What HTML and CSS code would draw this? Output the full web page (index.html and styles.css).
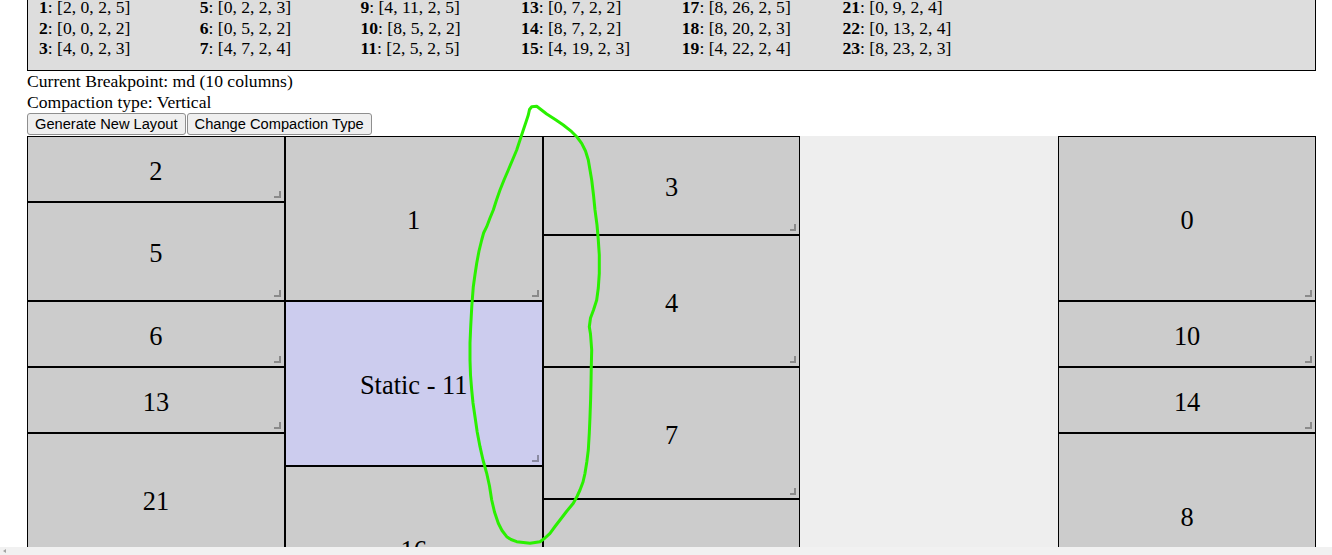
FILE: index.html
```html
<!DOCTYPE html>
<html>
<head>
<meta charset="utf-8">
<title>Responsive grid layout</title>
<link rel="stylesheet" href="styles.css">
</head>
<body>
<div class="viewport">
  <div class="page">
    <div class="layout-json">
      <div class="columns">
        <div class="li"><b>0</b>: [8, 0, 2, 5]</div>
        <div class="li"><b>1</b>: [2, 0, 2, 5]</div>
        <div class="li"><b>2</b>: [0, 0, 2, 2]</div>
        <div class="li"><b>3</b>: [4, 0, 2, 3]</div>
        <div class="li"><b>4</b>: [4, 3, 2, 4]</div>
        <div class="li"><b>5</b>: [0, 2, 2, 3]</div>
        <div class="li"><b>6</b>: [0, 5, 2, 2]</div>
        <div class="li"><b>7</b>: [4, 7, 2, 4]</div>
        <div class="li"><b>8</b>: [8, 9, 2, 5]</div>
        <div class="li"><b>9</b>: [4, 11, 2, 5]</div>
        <div class="li"><b>10</b>: [8, 5, 2, 2]</div>
        <div class="li"><b>11</b>: [2, 5, 2, 5]</div>
        <div class="li"><b>12</b>: [0, 17, 2, 3]</div>
        <div class="li"><b>13</b>: [0, 7, 2, 2]</div>
        <div class="li"><b>14</b>: [8, 7, 2, 2]</div>
        <div class="li"><b>15</b>: [4, 19, 2, 3]</div>
        <div class="li"><b>16</b>: [2, 10, 2, 5]</div>
        <div class="li"><b>17</b>: [8, 26, 2, 5]</div>
        <div class="li"><b>18</b>: [8, 20, 2, 3]</div>
        <div class="li"><b>19</b>: [4, 22, 2, 4]</div>
        <div class="li"><b>20</b>: [2, 15, 2, 4]</div>
        <div class="li"><b>21</b>: [0, 9, 2, 4]</div>
        <div class="li"><b>22</b>: [0, 13, 2, 4]</div>
        <div class="li"><b>23</b>: [8, 23, 2, 3]</div>
      </div>
    </div>
    <div class="line">Current Breakpoint: md (10 columns)</div>
    <div class="line">Compaction type: Vertical</div>
    <div class="buttons">
      <button class="btn">Generate New Layout</button>
      <button class="btn">Change Compaction Type</button>
    </div>
    <div class="grid">
      <div class="item" style="grid-column: 9 / span 2; grid-row: 1 / span 5;"><span class="text">0</span></div>
      <div class="item" style="grid-column: 3 / span 2; grid-row: 1 / span 5;"><span class="text">1</span></div>
      <div class="item" style="grid-column: 1 / span 2; grid-row: 1 / span 2;"><span class="text">2</span></div>
      <div class="item" style="grid-column: 5 / span 2; grid-row: 1 / span 3;"><span class="text">3</span></div>
      <div class="item" style="grid-column: 5 / span 2; grid-row: 4 / span 4;"><span class="text">4</span></div>
      <div class="item" style="grid-column: 1 / span 2; grid-row: 3 / span 3;"><span class="text">5</span></div>
      <div class="item" style="grid-column: 1 / span 2; grid-row: 6 / span 2;"><span class="text">6</span></div>
      <div class="item" style="grid-column: 5 / span 2; grid-row: 8 / span 4;"><span class="text">7</span></div>
      <div class="item" style="grid-column: 9 / span 2; grid-row: 10 / span 5;"><span class="text">8</span></div>
      <div class="item" style="grid-column: 5 / span 2; grid-row: 12 / span 5;"><span class="text">9</span></div>
      <div class="item" style="grid-column: 9 / span 2; grid-row: 6 / span 2;"><span class="text">10</span></div>
      <div class="item static" style="grid-column: 3 / span 2; grid-row: 6 / span 5;"><span class="text">Static - 11</span></div>
      <div class="item" style="grid-column: 1 / span 2; grid-row: 18 / span 3;"><span class="text">12</span></div>
      <div class="item" style="grid-column: 1 / span 2; grid-row: 8 / span 2;"><span class="text">13</span></div>
      <div class="item" style="grid-column: 9 / span 2; grid-row: 8 / span 2;"><span class="text">14</span></div>
      <div class="item" style="grid-column: 5 / span 2; grid-row: 20 / span 3;"><span class="text">15</span></div>
      <div class="item" style="grid-column: 3 / span 2; grid-row: 11 / span 5;"><span class="text">16</span></div>
      <div class="item" style="grid-column: 9 / span 2; grid-row: 27 / span 5;"><span class="text">17</span></div>
      <div class="item" style="grid-column: 9 / span 2; grid-row: 21 / span 3;"><span class="text">18</span></div>
      <div class="item" style="grid-column: 5 / span 2; grid-row: 23 / span 4;"><span class="text">19</span></div>
      <div class="item" style="grid-column: 3 / span 2; grid-row: 16 / span 4;"><span class="text">20</span></div>
      <div class="item" style="grid-column: 1 / span 2; grid-row: 10 / span 4;"><span class="text">21</span></div>
      <div class="item" style="grid-column: 1 / span 2; grid-row: 14 / span 4;"><span class="text">22</span></div>
      <div class="item" style="grid-column: 9 / span 2; grid-row: 24 / span 3;"><span class="text">23</span></div>
    </div>
  </div>
  <svg class="annotation" viewBox="0 0 1332 547" width="1332" height="547" xmlns="http://www.w3.org/2000/svg">
    <path class="loop" d="M531.7 106.7 L536.7 106.3 L546.7 114 L556 120 L563.3 125 L571.7 131.7 L577 137 L581.7 143.3 L585.5 151 L588.3 160 L590 170 L591.7 180 L593.5 195 L595 210 L597 225 L598.3 240 L599.3 255 L599.3 273.3 L598.3 288 L596.7 300 L593.5 310 L590.5 318 L589.3 326.7 L590.5 334 L591.7 350 L591.3 366 L591 383.3 L590.6 400 L590 416.7 L589.3 433 L588.3 450 L586.8 462 L585 473.3 L583 482 L580 490 L577 496.5 L573.3 503.3 L566.5 511.5 L560 520 L555 526.5 L550 533.3 L545 538 L540 541.7 L530 543.3 L516.7 541.7 L511 539.5 L506.7 536.7 L502 530.5 L498.3 523.3 L494.5 512 L491.7 500 L489.5 486 L486.7 473.3 L483 460 L480 446.7 L477.2 432 L475 416.7 L473 403 L471.7 390 L470.5 375 L470 360 L470 343 L470.7 326.7 L471.8 306 L473.3 286.7 L475 274.5 L476.7 263.3 L479 251 L481.7 240 L483.6 233 L486.7 226.7 L490 218 L493.3 210 L496.5 200 L500 190 L504 180 L508.3 170 L512.5 160 L516.7 150 L520 140 L523.3 130 L526 122 L528.3 115 L529.5 109.5 Z"/>
  </svg>
</div>
<div class="hscroll"><span class="arrow"></span></div>
</body>
</html>
```
FILE: styles.css
```css
html, body {
  margin: 0;
  padding: 0;
  background: #ffffff;
  overflow: hidden;
}

body {
  width: 1332px;
  height: 555px;
  font-family: "Liberation Serif", "Times New Roman", serif;
  font-size: 17.6px;
  color: #000000;
}

.viewport {
  position: relative;
  height: 547px;
  overflow: hidden;
}

.page {
  padding: 0 16px 0 27px;
}

.layout-json {
  margin-top: -35.4px;
  background: #dddddd;
  border: 1px solid #000000;
  padding: 11px 8px 11px 11px;
}

.columns {
  display: grid;
  grid-template-columns: repeat(8, 1fr);
  grid-template-rows: repeat(4, 20.6px);
  grid-auto-flow: column;
  column-gap: 17.6px;
  line-height: 20.6px;
  white-space: nowrap;
}

.li b {
  font-weight: bold;
}

.line {
  height: 21px;
  line-height: 21px;
}

.buttons {
  display: flex;
  gap: 1px;
  height: 22px;
}

.btn {
  box-sizing: border-box;
  height: 22px;
  margin: 0;
  padding: 0 7px;
  font-family: "Liberation Sans", Arial, sans-serif;
  font-size: 14.67px;
  line-height: 20px;
  color: #000000;
  background: #efefef;
  border: 1px solid #8f8f8f;
  border-radius: 3px;
}

.grid {
  margin-top: 1px;
  background: #eeeeee;
  display: grid;
  grid-template-columns: repeat(10, 1fr);
  grid-auto-rows: 33px;
}

.item {
  position: relative;
  box-sizing: border-box;
  background: #cccccc;
  border: 1px solid #000000;
  display: flex;
  align-items: center;
  justify-content: center;
  min-width: 0;
}

.item.static {
  background: #ccccee;
}

.item::after {
  content: "";
  position: absolute;
  right: 3px;
  bottom: 3px;
  width: 4.6px;
  height: 4.6px;
  border-right: 2px solid rgba(0, 0, 0, 0.32);
  border-bottom: 2px solid rgba(0, 0, 0, 0.32);
}

.text {
  font-size: 26.4px;
  line-height: 28px;
  padding-top: 4px;
  white-space: nowrap;
}

.annotation {
  position: absolute;
  left: 0;
  top: 0;
  pointer-events: none;
}

.loop {
  fill: none;
  stroke: #2af000;
  stroke-width: 3;
  stroke-linejoin: round;
  stroke-linecap: round;
}

.hscroll {
  height: 8px;
  background: #f1f1f1;
  position: relative;
}

.arrow {
  position: absolute;
  left: 3px;
  top: 2px;
  width: 0;
  height: 0;
  border-top: 2.5px solid transparent;
  border-bottom: 2.5px solid transparent;
  border-right: 3px solid #a3a3a3;
}
```
